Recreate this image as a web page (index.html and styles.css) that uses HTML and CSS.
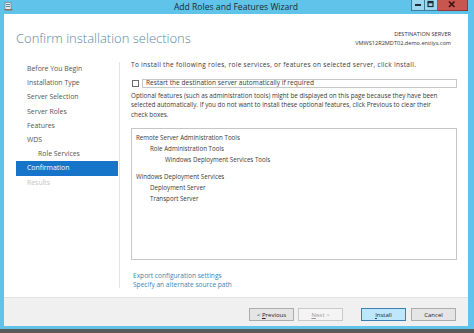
FILE: index.html
```html
<!DOCTYPE html>
<html lang="en">
<head>
    <meta charset="UTF-8">
    <title>Add Roles and Features Wizard</title>
    <link rel="stylesheet" href="styles.css">
</head>
<body>
    <div class="window">
        <!-- Title bar -->
        <div class="titlebar">
            <svg class="app-icon" width="9" height="9" viewBox="0 0 9 9">
                <rect x="1" y="0.5" width="6" height="7" fill="#e8eef2" stroke="#7a8a96" stroke-width="0.8"/>
                <rect x="2" y="2" width="4" height="1" fill="#5a7fa0"/>
                <rect x="2" y="4" width="4" height="1" fill="#5a7fa0"/>
                <rect x="0.5" y="7" width="8" height="1.5" fill="#8c6d5a"/>
            </svg>
            <div class="title">Add Roles and Features Wizard</div>
            <div class="caption-buttons">
                <span class="cap cap-min"><svg width="14" height="11" viewBox="0 0 14 11"><rect x="4" y="5" width="6" height="2" fill="#1d2c36"/></svg></span>
                <span class="cap cap-max"><svg width="13" height="11" viewBox="0 0 13 11"><rect x="4" y="2.5" width="5" height="5" fill="none" stroke="#1d2c36" stroke-width="1.2"/><rect x="4" y="2.5" width="5" height="1.8" fill="#1d2c36"/></svg></span>
                <span class="cap cap-close"><svg width="30" height="11" viewBox="0 0 30 11"><path d="M12 2.5 L17.5 8 M17.5 2.5 L12 8" stroke="#3b1212" stroke-width="1.6"/></svg></span>
            </div>
        </div>

        <div class="client">
            <!-- Header -->
            <div class="header">
                <h1>Confirm installation selections</h1>
                <div class="dest">
                    <div>DESTINATION SERVER</div>
                    <div>VMWS12R2MDT02.demo.entiiys.com</div>
                </div>
            </div>

            <div class="main">
                <!-- Steps -->
                <ul class="nav">
                    <li>Before You Begin</li>
                    <li>Installation Type</li>
                    <li>Server Selection</li>
                    <li>Server Roles</li>
                    <li>Features</li>
                    <li>WDS</li>
                    <li class="sub">Role Services</li>
                    <li class="active">Confirmation</li>
                    <li class="disabled">Results</li>
                </ul>

                <!-- Page content -->
                <div class="content">
                    <p class="intro">To install the following roles, role services, or features on selected server, click Install.</p>
                    <div class="check-row">
                        <span class="checkbox"></span>
                        <span class="check-label">Restart the destination server automatically if required</span>
                    </div>
                    <p class="note">Optional features (such as administration tools) might be displayed on this page because they have been selected automatically. If you do not want to install these optional features, click Previous to clear their check boxes.</p>

                    <div class="listbox">
                        <div class="group">
                            <div class="item">Remote Server Administration Tools</div>
                            <div class="item lvl1">Role Administration Tools</div>
                            <div class="item lvl2">Windows Deployment Services Tools</div>
                        </div>
                        <div class="group">
                            <div class="item">Windows Deployment Services</div>
                            <div class="item lvl1">Deployment Server</div>
                            <div class="item lvl1">Transport Server</div>
                        </div>
                    </div>

                    <div class="links">
                        <a href="#">Export configuration settings</a>
                        <a href="#">Specify an alternate source path</a>
                    </div>
                </div>
            </div>

            <!-- Buttons -->
            <div class="footer">
                <button>&lt; <u>P</u>revious</button>
                <button disabled><u>N</u>ext &gt;</button>
                <button class="default"><u>I</u>nstall</button>
                <button>Cancel</button>
            </div>
        </div>
    </div>
</body>
</html>
```

FILE: styles.css
```css
body {
    margin: 0;
    background-color: #5a5a5a;
    font-family: "Open Sans", "Noto Sans", sans-serif;
    color: #3a3a3a;
}

.window {
    width: 474px;
    height: 329px;
    box-sizing: border-box;
    background-color: #60c4ea;
    padding: 0 6px 3px 4px;
    display: flex;
    flex-direction: column;
}

/* Title bar */
.titlebar {
    height: 14px;
    display: grid;
    grid-template-columns: 1fr auto 1fr;
    align-items: center;
}

.app-icon {
    margin-top: -2px;
}

.title {
    font-size: 8.6px;
    color: #1b2a33;
    line-height: 14px;
}

.caption-buttons {
    justify-self: end;
    align-self: start;
    display: flex;
}

.cap {
    display: block;
    height: 11px;
    box-sizing: border-box;
    border: 1px solid #3d7d9b;
    border-top: none;
    background-color: #9dd8f0;
}

.cap svg {
    display: block;
    margin: -1px 0 0 -1px;
}

.cap-min { width: 14px; }
.cap-max { width: 13px; border-left: none; }
.cap-close {
    width: 30px;
    background-color: #c9564e;
    border-color: #8f3a34;
    border-left: none;
}

/* Client area */
.client {
    flex: 1;
    background-color: #fff;
    display: flex;
    flex-direction: column;
}

.header {
    height: 46px;
    display: flex;
    justify-content: space-between;
    align-items: flex-start;
    padding: 0 17px 0 12px;
}

h1 {
    margin: 15px 0 0 0;
    font-size: 13px;
    font-weight: 300;
    color: #5b87a3;
    line-height: 18px;
}

.dest {
    margin-top: 16px;
    text-align: right;
    font-size: 5.6px;
    line-height: 9px;
    color: #333;
}

.main {
    flex: 1;
    display: flex;
}

/* Steps list */
.nav {
    list-style: none;
    margin: 2px 0 9px 0;
    padding: 0 1px 0 12px;
    width: 102px;
    border-right: 1px solid #e3e3e3;
}

.nav li {
    height: 14.2px;
    line-height: 14.2px;
    padding-left: 11px;
    font-size: 6.9px;
    color: #555;
}

.nav li.sub {
    padding-left: 22px;
}

.nav li.active {
    background-color: #1775c9;
    color: #fff;
}

.nav li.disabled {
    color: #c4c4c4;
}

/* Content */
.content {
    flex: 1;
    padding: 0 11px 0 11px;
    font-size: 6.5px;
    line-height: 9.5px;
}

.content p {
    margin: 0;
}

.intro {
    letter-spacing: 0.3px;
}

.check-row {
    display: flex;
    align-items: center;
    height: 7px;
    margin-top: 10px;
}

.checkbox {
    width: 7px;
    height: 7px;
    margin-left: 1px;
    box-sizing: border-box;
    border: 1px solid #6d6d6d;
    background-color: #fff;
}

.check-label {
    flex: 1;
    margin-left: 3px;
    height: 7px;
    line-height: 6px;
    padding-left: 3px;
    font-size: 6.6px;
    border: 1px solid #c8c8c8;
}

.note {
    margin-top: 4px !important;
    padding-right: 15px;
    font-size: 6.3px;
}

.listbox {
    margin-top: 9px;
    height: 132px;
    box-sizing: border-box;
    border: 1px solid #c6c6c6;
    padding: 3px 4px;
    font-size: 6.2px;
}

.group + .group {
    margin-top: 6px;
}

.item {
    line-height: 11px;
}

.item.lvl1 { padding-left: 14px; }
.item.lvl2 { padding-left: 29px; }

.links {
    margin-top: 11px;
    display: flex;
    flex-direction: column;
    line-height: 9px;
    padding-left: 2px;
    font-size: 6.6px;
}

.links a {
    color: #3a86b3;
    text-decoration: none;
}

/* Footer */
.footer {
    height: 29px;
    box-sizing: border-box;
    background-color: #f0f0f0;
    border-top: 1px solid #e2e2e2;
    display: flex;
    justify-content: flex-end;
    align-items: flex-start;
    padding: 10px 12px 0 0;
    gap: 4px;
}

button {
    width: 45px;
    height: 13px;
    padding: 0;
    font-family: inherit;
    font-size: 6px;
    color: #222;
    background-color: #e5e5e5;
    border: 1px solid #acacac;
    border-radius: 0;
}

button:disabled {
    color: #9a9a9a;
    background-color: #f4f4f4;
    border-color: #c9c9c9;
}

button.default {
    margin-left: 14px;
    background-color: #bee6fd;
    border-color: #3c7fb1;
}

button.default + button {
    margin-left: 1px;
}
```
